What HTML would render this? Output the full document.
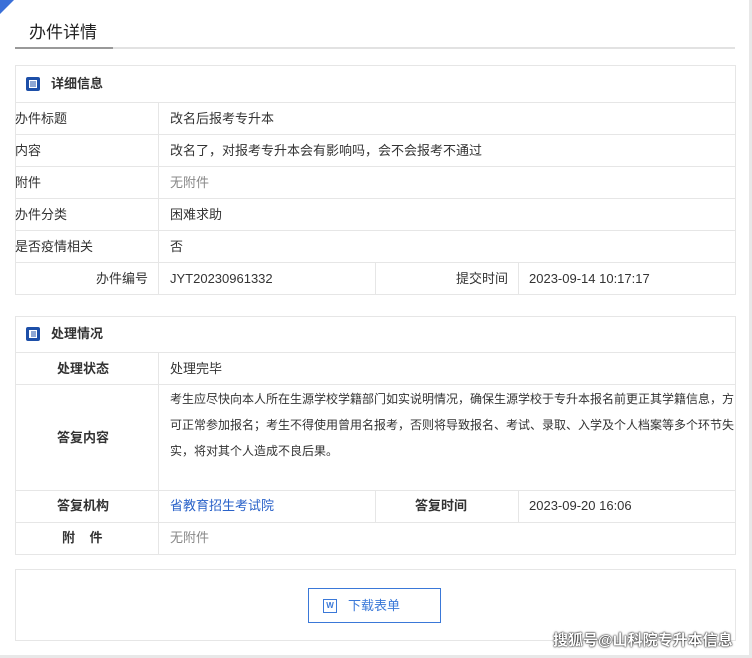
<!DOCTYPE html>
<html><head><meta charset="utf-8"><style>
*{margin:0;padding:0;box-sizing:border-box}
body{width:752px;height:658px;background:#fff;position:relative;overflow:hidden;font-family:"Liberation Sans","Noto Sans CJK SC",sans-serif;color:#333;font-size:13px}
.a{position:absolute}
.h{border-top:1px solid #e6e6e6;left:15px;width:720px;height:0}
.v{border-left:1px solid #e6e6e6;width:0}
.t{position:absolute;white-space:nowrap;line-height:16px}
</style></head><body>
<div class="a" style="left:0;top:0;width:0;height:0;border-top:14px solid #3a6fd8;border-right:14px solid transparent"></div>
<div class="a" style="right:0;top:0;width:3px;height:658px;background:#e8e8e8"></div>
<div class="a" style="left:0;bottom:0;width:752px;height:3px;background:#e8e8e8"></div>
<div class="t" style="left:29px;top:23px;font-size:17px;color:#222;line-height:20px">办件详情</div>
<div class="a" style="left:15px;top:47px;width:720px;height:2px;background:#e2e2e2"></div>
<div class="a" style="left:15px;top:47px;width:98px;height:2px;background:#999"></div>

<!-- table 1 -->
<div class="a" style="left:15px;top:65px;width:721px;height:230px;border:1px solid #e6e6e6"></div>
<div class="a h" style="top:102px"></div><div class="a h" style="top:134px"></div><div class="a h" style="top:166px"></div><div class="a h" style="top:198px"></div><div class="a h" style="top:230px"></div><div class="a h" style="top:262px"></div>
<div class="a v" style="left:158px;top:102px;height:192px"></div>
<div class="a v" style="left:375px;top:262px;height:32px"></div>
<div class="a v" style="left:518px;top:262px;height:32px"></div>
<svg class="a" style="left:26px;top:77px" width="14" height="14"><rect x="0" y="0" width="14" height="14" rx="2" fill="#1d4fa8"/><rect x="3" y="3" width="8" height="8" fill="#fff"/><path d="M4 5h6M4 7h6M4 9h6" stroke="#1d4fa8" stroke-width="1"/></svg>
<div class="t" style="left:51px;top:76px;font-weight:bold;color:#333">详细信息</div>
<div class="t" style="left:15px;top:111px">办件标题</div><div class="t" style="left:170px;top:111px">改名后报考专升本</div>
<div class="t" style="left:15px;top:143px">内容</div><div class="t" style="left:170px;top:143px">改名了，对报考专升本会有影响吗，会不会报考不通过</div>
<div class="t" style="left:15px;top:175px">附件</div><div class="t" style="left:170px;top:175px;color:#888">无附件</div>
<div class="t" style="left:15px;top:207px">办件分类</div><div class="t" style="left:170px;top:207px">困难求助</div>
<div class="t" style="left:15px;top:239px">是否疫情相关</div><div class="t" style="left:170px;top:239px">否</div>
<div class="t" style="left:96px;top:271px">办件编号</div><div class="t" style="left:170px;top:271px">JYT20230961332</div>
<div class="t" style="left:456px;top:271px">提交时间</div><div class="t" style="left:529px;top:271px">2023-09-14 10:17:17</div>

<!-- table 2 -->
<div class="a" style="left:15px;top:316px;width:721px;height:239px;border:1px solid #e6e6e6"></div>
<div class="a h" style="top:352px"></div><div class="a h" style="top:384px"></div><div class="a h" style="top:490px"></div><div class="a h" style="top:522px"></div>
<div class="a v" style="left:158px;top:352px;height:202px"></div>
<div class="a v" style="left:375px;top:490px;height:32px"></div>
<div class="a v" style="left:518px;top:490px;height:32px"></div>
<svg class="a" style="left:26px;top:327px" width="14" height="14"><rect x="0" y="0" width="14" height="14" rx="2" fill="#1d4fa8"/><rect x="3" y="3" width="8" height="8" fill="#fff"/><path d="M5 5h5M5 7h5M5 9h5" stroke="#1d4fa8" stroke-width="1"/></svg>
<div class="t" style="left:51px;top:326px;font-weight:bold">处理情况</div>
<div class="t" style="left:57px;top:361px;font-weight:bold">处理状态</div><div class="t" style="left:170px;top:361px">处理完毕</div>
<div class="t" style="left:57px;top:430px;font-weight:bold">答复内容</div>
<div class="a" style="left:170px;top:386px;width:566px;font-size:12px;line-height:26px;white-space:normal">考生应尽快向本人所在生源学校学籍部门如实说明情况，确保生源学校于专升本报名前更正其学籍信息，方可正常参加报名；考生不得使用曾用名报考，否则将导致报名、考试、录取、入学及个人档案等多个环节失实，将对其个人造成不良后果。</div>
<div class="t" style="left:57px;top:498px;font-weight:bold">答复机构</div><div class="t" style="left:170px;top:498px;color:#2a62c9">省教育招生考试院</div>
<div class="t" style="left:415px;top:498px;font-weight:bold">答复时间</div><div class="t" style="left:529px;top:498px">2023-09-20 16:06</div>
<div class="t" style="left:62px;top:530px;font-weight:bold">附&nbsp;&nbsp;&nbsp;&nbsp;件</div><div class="t" style="left:170px;top:530px;color:#888">无附件</div>

<div class="a" style="left:15px;top:569px;width:721px;height:72px;border:1px solid #e6e6e6"></div>
<div class="a" style="left:308px;top:588px;width:133px;height:35px;border:1px solid #3a78d8"></div>
<div class="a" style="left:323px;top:599px;width:14px;height:14px;border:1px solid #3a78d8;color:#3a78d8;font-size:8px;font-weight:bold;text-align:center;line-height:12px">W</div>
<div class="t" style="left:348px;top:598px;color:#3a78d8">下载表单</div>
<div class="t" style="left:553px;top:632px;font-size:15px;font-weight:bold;color:#fff;text-shadow:0 0 2px #000,0 0 1px #000;line-height:18px">搜狐号@山科院专升本信息</div>
</body></html>
